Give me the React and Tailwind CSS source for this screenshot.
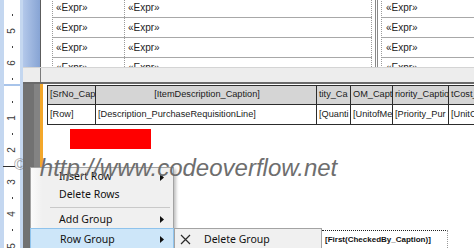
// Report designer – tablix context menu
const topTicks = [".", "5", ".", "6", "."];
const bottomTicks = [".", "1", ".", "2", "-", "3", ".", "4", ".", "5"];

function Tick({ t }) {
  return (
    <div className="h-[16px] shrink-0 flex items-center justify-center">
      {t === "." && <span className="w-[1px] h-[2px] bg-[#404040]" />}
      {t === "-" && <span className="w-[12px] h-[1px] bg-[#303030] -ml-[6px]" />}
      {t !== "." && t !== "-" && (
        <span className="-rotate-90 text-[10px] leading-none text-[#3a3a3a]">{t}</span>
      )}
    </div>
  );
}

function Ruler() {
  return (
    <div className="w-[23px] shrink-0 flex flex-col bg-white border-l-[4px] border-r-[3px] border-[#c4d7f0]">
      <div className="h-[84px] shrink-0 pt-[7px] flex flex-col">
        {topTicks.map((t, i) => (
          <Tick key={i} t={t} />
        ))}
      </div>
      <div className="h-[2px] shrink-0 bg-[#a8c4ea]" />
      <div className="pt-[8px] flex flex-col">
        {bottomTicks.map((t, i) => (
          <Tick key={i} t={t} />
        ))}
      </div>
    </div>
  );
}

function ExprRow({ cells, widths }) {
  return (
    <div className="h-[20px] shrink-0 flex border-b border-[#a8a8a8]">
      {cells.map((c, i) => (
        <div
          key={i}
          className={`${widths[i]} shrink-0 flex items-center pl-[3px] border-r border-dotted border-[#9a9a9a] text-[10px] text-[#222]`}
        >
          {c}
        </div>
      ))}
    </div>
  );
}

function Arrow() {
  return (
    <svg width="4" height="7" viewBox="0 0 4 7" className="shrink-0">
      <path d="M0 0 L4 3.5 L0 7 Z" fill="#111" />
    </svg>
  );
}

const headers = [
  ["w-[48px]", "[SrNo_Cap", "justify-start"],
  ["w-[221px]", "[ItemDescription_Caption]", "justify-center"],
  ["w-[34px]", "tity_Ca", "justify-start"],
  ["w-[42px]", "OM_Capti", "justify-start"],
  ["w-[56px]", "riority_Captio", "justify-start"],
  ["w-[40px]", "tCost_", "justify-start"],
];
const values = ["[Row]", "[Description_PurchaseRequisitionLine]", "[Quanti", "[UnitofMe", "[Priority_Pur", "[UnitC"];

export default function App() {
  return (
    <div className="w-[474px] h-[248px] overflow-hidden relative flex bg-white font-['Liberation_Sans',Arial,sans-serif]">
      <Ruler />
      <div className="flex-1 flex flex-col min-w-0">
        {/* upper body */}
        <div className="h-[67px] flex overflow-hidden shrink-0">
          <div className="w-[17px] shrink-0 bg-gradient-to-r from-[#b3c8ea] to-[#87a4d4]" />
          <div className="w-[1px] shrink-0 bg-[#5c5c5c]" />
          <div className="flex-1 flex items-start pl-[11px] -mt-[2px] min-w-0">
            <div className="flex flex-col border-l border-dotted border-[#9a9a9a]">
              {[0, 1, 2, 3].map((i) => (
                <ExprRow key={i} cells={["«Expr»", "«Expr»"]} widths={["w-[72px]", "w-[247px]"]} />
              ))}
            </div>
            <div className="w-[9px] h-[90px] shrink-0 flex justify-center">
              <div className="w-[3px] border-x border-[#8a8a8a]" />
            </div>
            <div className="flex-1 flex flex-col border-l border-dotted border-[#9a9a9a]">
              {[0, 1, 2, 3].map((i) => (
                <div key={i} className="h-[20px] shrink-0 flex items-center pl-[4px] border-b border-[#a8a8a8] text-[10px] text-[#222]">
                  «Expr»
                </div>
              ))}
            </div>
          </div>
        </div>

        {/* section band */}
        <div className="h-[17px] shrink-0 flex bg-[#ededed] border-t border-[#d4d4d4] border-b-[2px] border-b-[#6a6a6a]">
          <div className="w-[17px] shrink-0" />
          <div className="w-[1px] shrink-0 bg-[#7a7a7a]" />
        </div>

        {/* lower body */}
        <div className="flex-1 flex min-h-0">
          <div className="w-[11px] shrink-0 bg-[#727272]" />
          <div className="w-[6px] shrink-0 bg-[#838383]" />
          <div className="w-[3px] shrink-0 bg-[#f3a72a]" />
          <div className="flex-1 flex flex-col pl-[4px] pt-[1px] min-w-0">
            <div className="flex flex-col border-t border-l border-[#2c2c2c] w-max">
              <div className="h-[19px] flex bg-[#d5d5d5] border-b border-[#2c2c2c]">
                {headers.map(([w, t, j], i) => (
                  <div key={i} className={`${w} shrink-0 flex items-center ${j} overflow-hidden whitespace-nowrap pl-[2px] border-r border-[#2c2c2c] text-[9.2px] text-[#1a1a1a]`}>
                    {t}
                  </div>
                ))}
              </div>
              <div className="h-[20px] flex bg-white border-b border-[#2c2c2c]">
                {values.map((t, i) => (
                  <div key={i} className={`${headers[i][0]} shrink-0 flex items-center overflow-hidden whitespace-nowrap pl-[2px] border-r border-[#2c2c2c] text-[9.2px] text-[#1a1a1a]`}>
                    {t}
                  </div>
                ))}
              </div>
            </div>
            <div className="mt-[4px] ml-[23px] w-[81px] h-[20px] bg-[#ff0000]" />
            <div className="mt-auto ml-[275px] w-[126px] h-[18px] flex items-center pl-[3px] border-t border-t-[#222] border-r border-r-[#9a9a9a] border-dotted whitespace-nowrap font-bold text-[8px] text-[#111]">
              [First(CheckedBy_Caption)]
            </div>
          </div>
        </div>
      </div>

      {/* context menu */}
      <div className="absolute left-[30px] top-[167px] w-[144px] h-[90px] flex flex-col border border-[#a3a3a3] bg-gradient-to-r from-[#fbfbfb] via-[#f0f0f0] via-[8%] to-[#f0f0f0] shadow-[2px_2px_3px_rgba(0,0,0,0.25)] font-['Noto_Sans','Open_Sans',sans-serif] text-[10.5px] text-[#111]">
        <div className="h-[18px] flex items-center justify-between pl-[28px] pr-[9px]">
          <span>Insert Row</span>
          <Arrow />
        </div>
        <div className="h-[18px] flex items-center pl-[28px]">
          <span>Delete Rows</span>
        </div>
        <div className="h-[7px] flex items-center pl-[19px] pr-[3px]">
          <div className="flex-1 h-[1px] bg-[#c9c9c9]" />
        </div>
        <div className="h-[17px] flex items-center justify-between pl-[28px] pr-[9px]">
          <span>Add Group</span>
          <Arrow />
        </div>
        <div className="h-[22px] -mx-[1px] flex items-start pt-[3px] justify-between pl-[29px] pr-[9px] bg-[#cde6f9] border border-[#8fc3ec]">
          <span className="leading-[14px]">Row Group</span>
          <span className="mt-[4px]"><Arrow /></span>
        </div>
      </div>

      {/* sub menu */}
      <div className="absolute left-[174px] top-[228px] w-[148px] h-[26px] flex items-start pt-[4px] bg-[#f0f0f0] border border-[#a3a3a3] font-['Noto_Sans','Open_Sans',sans-serif] text-[10.5px] text-[#111]">
        <svg width="11" height="11" viewBox="0 0 11 11" className="ml-[5px] mt-[1px] shrink-0">
          <path d="M1 1 L10 10 M10 1 L1 10" stroke="#2a2a2a" strokeWidth="1.2" />
        </svg>
        <span className="ml-[13px] leading-[13px]">Delete Group</span>
      </div>

      {/* watermark */}
      <div className="absolute left-[14px] top-[156px] flex items-start pointer-events-none text-[#6e6e6e] italic">
        <span className="text-[16px] leading-none mt-[1px] not-italic opacity-60">©</span>
        <span className="ml-[14px] text-[24px] leading-none">http://www.codeoverflow.net</span>
      </div>
    </div>
  );
}
